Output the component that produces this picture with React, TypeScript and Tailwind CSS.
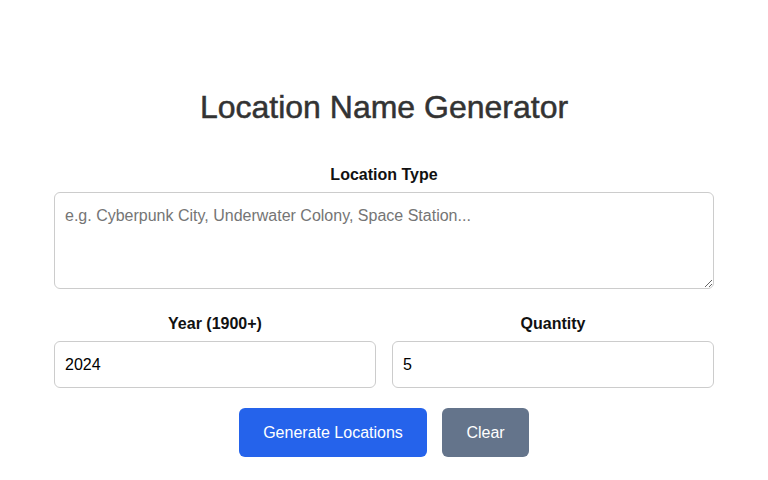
import { useState } from "react";

const App = () => {
  const [type, setType] = useState("");
  const [year, setYear] = useState("2024");
  const [qty, setQty] = useState("5");

  const onClear = () => {
    setType("");
    setYear("2024");
    setQty("5");
  };

  return (
    <div className="min-h-[480px] bg-white font-['Liberation_Sans',Arial,sans-serif]">
      <div className="mx-auto w-[660px] pt-[89px]">
        <h1 className="text-center text-[32px] leading-[37px] text-[#333] [-webkit-text-stroke:0.5px_#333]">
          Location Name Generator
        </h1>

        <div className="mt-[40px] flex flex-col">
          <label className="mb-[8px] text-center text-base leading-[18px] font-bold text-[#111]">
            Location Type
          </label>
          <textarea
            value={type}
            onChange={(e) => setType(e.target.value)}
            placeholder="e.g. Cyberpunk City, Underwater Colony, Space Station..."
            className="h-[97px] w-full rounded-md border border-[#ccc] px-[10px] pt-[14px] pb-[10px] text-base leading-[18px] text-black placeholder:text-[#757575]"
          />
        </div>

        <div className="mt-[26px] grid grid-cols-2 gap-4">
          <div className="flex flex-col">
            <label className="mb-[8px] text-center text-base leading-[18px] font-bold text-[#111]">
              Year (1900+)
            </label>
            <input
              type="text"
              value={year}
              onChange={(e) => setYear(e.target.value)}
              className="h-[47px] w-full rounded-md border border-[#ccc] px-[10px] text-base text-black"
            />
          </div>
          <div className="flex flex-col">
            <label className="mb-[8px] text-center text-base leading-[18px] font-bold text-[#111]">
              Quantity
            </label>
            <input
              type="text"
              value={qty}
              onChange={(e) => setQty(e.target.value)}
              className="h-[47px] w-full rounded-md border border-[#ccc] px-[10px] text-base text-black"
            />
          </div>
        </div>

        <div className="mt-[20px] flex justify-center gap-[15px]">
          <button className="h-[49px] w-[188px] rounded-md bg-[#2563eb] text-base text-white">
            Generate Locations
          </button>
          <button
            onClick={onClear}
            className="h-[49px] w-[87px] rounded-md bg-[#64748b] text-base text-white"
          >
            Clear
          </button>
        </div>
      </div>
    </div>
  );
};

export default App;
